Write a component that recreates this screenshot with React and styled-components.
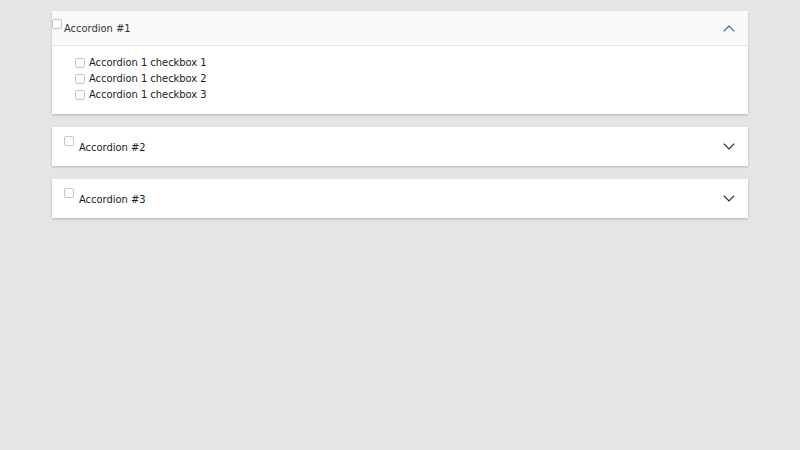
import React from "react";
import styled, { createGlobalStyle } from "styled-components";

const Global = createGlobalStyle`
  html, body { margin: 0; padding: 0; background: #e5e5e5; }
  body { font-family: "DejaVu Sans Condensed", "DejaVu Sans", sans-serif; font-size: 11px; color: #1a1a1a; }
`;

const Page = styled.div`
  display: flex;
  flex-direction: column;
  gap: 13px;
  padding: 11px 52px;
  min-height: 450px;
  box-sizing: border-box;
`;

const Card = styled.div`
  background: #fff;
  box-shadow: 0 1px 2px rgba(0, 0, 0, 0.22);
`;

const Header = styled.div`
  display: flex;
  align-items: center;
  box-sizing: border-box;
  height: ${(p) => (p.$open ? "35px" : "39px")};
  padding: ${(p) => (p.$open ? "0 13px 0 0" : "0 13px 0 12px")};
  background: ${(p) => (p.$open ? "#fafafa" : "#fff")};
  border-bottom: ${(p) => (p.$open ? "1px solid #e4e4e4" : "none")};
`;

const Box = styled.span`
  display: inline-block;
  width: 10px;
  height: 10px;
  box-sizing: border-box;
  border: 1px solid #c6c6c6;
  border-radius: 2px;
  background: #fff;
  flex: none;
`;

const HeaderBox = styled(Box)`
  align-self: flex-start;
  margin-top: ${(p) => (p.$open ? "8px" : "9px")};
`;

const Title = styled.span`
  flex: 1;
  margin-left: ${(p) => (p.$open ? "2px" : "5px")};
  margin-top: ${(p) => (p.$open ? "2px" : "3px")};
  color: ${(p) => (p.$open ? "#333" : "#1a1a1a")};
  line-height: 16px;
`;

const Body = styled.div`
  display: flex;
  flex-direction: column;
  padding: 9px 0 11px 23px;
`;

const Row = styled.label`
  display: flex;
  align-items: center;
  gap: 4px;
  height: 16px;
  line-height: 16px;
  color: #1a1a1a;
`;

const Chevron = ({ up }) => (
  <svg width="12" height="7" viewBox="0 0 12 7" style={{ flex: "none" }}>
    <path
      d={up ? "M0.7 6.3 L6 1 L11.3 6.3" : "M0.7 0.7 L6 6 L11.3 0.7"}
      fill="none"
      stroke={up ? "#3d5f96" : "#2a2a2a"}
      strokeWidth="1.2"
    />
  </svg>
);

const Accordion = ({ title, open, items }) => (
  <Card>
    <Header $open={open}>
      <HeaderBox $open={open} />
      <Title $open={open}>{title}</Title>
      <Chevron up={open} />
    </Header>
    {open && (
      <Body>
        {items.map((t) => (
          <Row key={t}>
            <Box />
            {t}
          </Row>
        ))}
      </Body>
    )}
  </Card>
);

export default function App() {
  return (
    <>
      <Global />
      <Page>
        <Accordion
          title="Accordion #1"
          open
          items={[
            "Accordion 1 checkbox 1",
            "Accordion 1 checkbox 2",
            "Accordion 1 checkbox 3",
          ]}
        />
        <Accordion title="Accordion #2" />
        <Accordion title="Accordion #3" />
      </Page>
    </>
  );
}
